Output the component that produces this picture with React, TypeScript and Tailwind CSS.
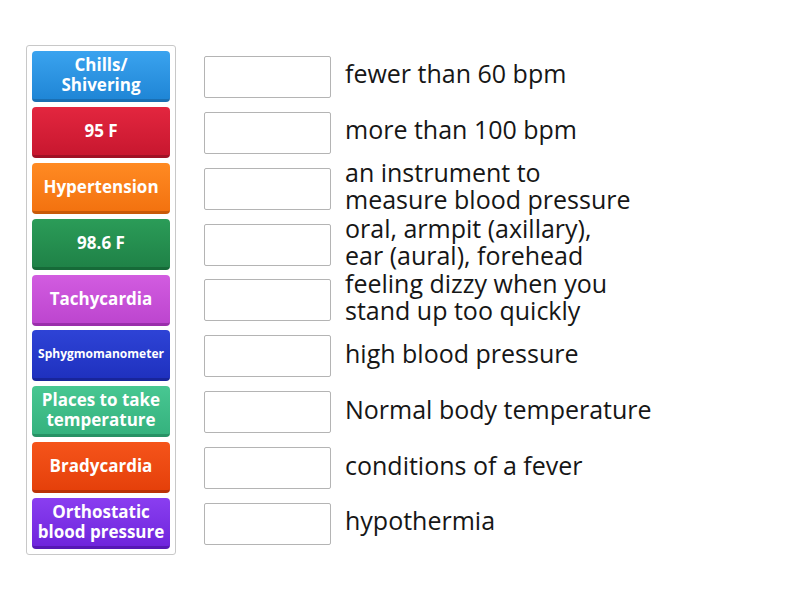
const tiles = [
  { label: 'Chills/\nShivering', cls: 'from-[#3aa3ef] to-[#1f86d6] border-[#1a6fb3]', size: 'text-[17px]' },
  { label: '95 F', cls: 'from-[#e3263f] to-[#c8172f] border-[#a01125]', size: 'text-[17px]' },
  { label: 'Hypertension', cls: 'from-[#ff8a22] to-[#f3720f] border-[#c95a08]', size: 'text-[17px]' },
  { label: '98.6 F', cls: 'from-[#2b9c58] to-[#1f8247] border-[#166a38]', size: 'text-[17px]' },
  { label: 'Tachycardia', cls: 'from-[#d25ce0] to-[#bd45cf] border-[#9a2fab]', size: 'text-[17px]' },
  { label: 'Sphygmomanometer', cls: 'from-[#2e43d6] to-[#1f31bf] border-[#18259a]', size: 'text-[12px]' },
  { label: 'Places to take\ntemperature', cls: 'from-[#48c792] to-[#35b27e] border-[#279265]', size: 'text-[17px]' },
  { label: 'Bradycardia', cls: 'from-[#f5541a] to-[#e5400a] border-[#bb3206]', size: 'text-[17px]' },
  { label: 'Orthostatic\nblood pressure', cls: 'from-[#8a3ef0] to-[#6f24dc] border-[#5618b5]', size: 'text-[17px]' },
]

const answers = [
  'fewer than 60 bpm',
  'more than 100 bpm',
  'an instrument to\nmeasure blood pressure',
  'oral, armpit (axillary),\near (aural), forehead',
  'feeling dizzy when you\nstand up too quickly',
  'high blood pressure',
  'Normal body temperature',
  'conditions of a fever',
  'hypothermia',
]

export default function App() {
  return (
    <div className="w-[800px] h-[600px] bg-white font-['Open_Sans',sans-serif] pt-[45px] pl-[26px] flex items-start gap-[28px]">
      {/* Draggable tiles */}
      <div className="w-[150px] border border-[#c8c8c8] rounded-[3px] p-[5px] flex flex-col gap-[4.875px]">
        {tiles.map((t) => (
          <div
            key={t.label}
            className={`h-[51px] rounded-[4px] bg-gradient-to-b border-b-[3px] ${t.cls} flex items-center justify-center text-center text-white font-bold leading-[20px] whitespace-pre-line ${t.size}`}
          >
            {t.label}
          </div>
        ))}
      </div>

      {/* Drop targets + definitions */}
      <div className="flex flex-col pt-[4px]">
        {answers.map((a) => (
          <div key={a} className="h-[55.875px] flex items-center gap-[14px]">
            <div className="w-[127px] h-[42px] border border-[#b4b4b4] rounded-[2px] bg-white shrink-0" />
            <div className="text-[25px] leading-[27px] text-[#161616] whitespace-pre-line mb-[6px]">{a}</div>
          </div>
        ))}
      </div>
    </div>
  )
}
